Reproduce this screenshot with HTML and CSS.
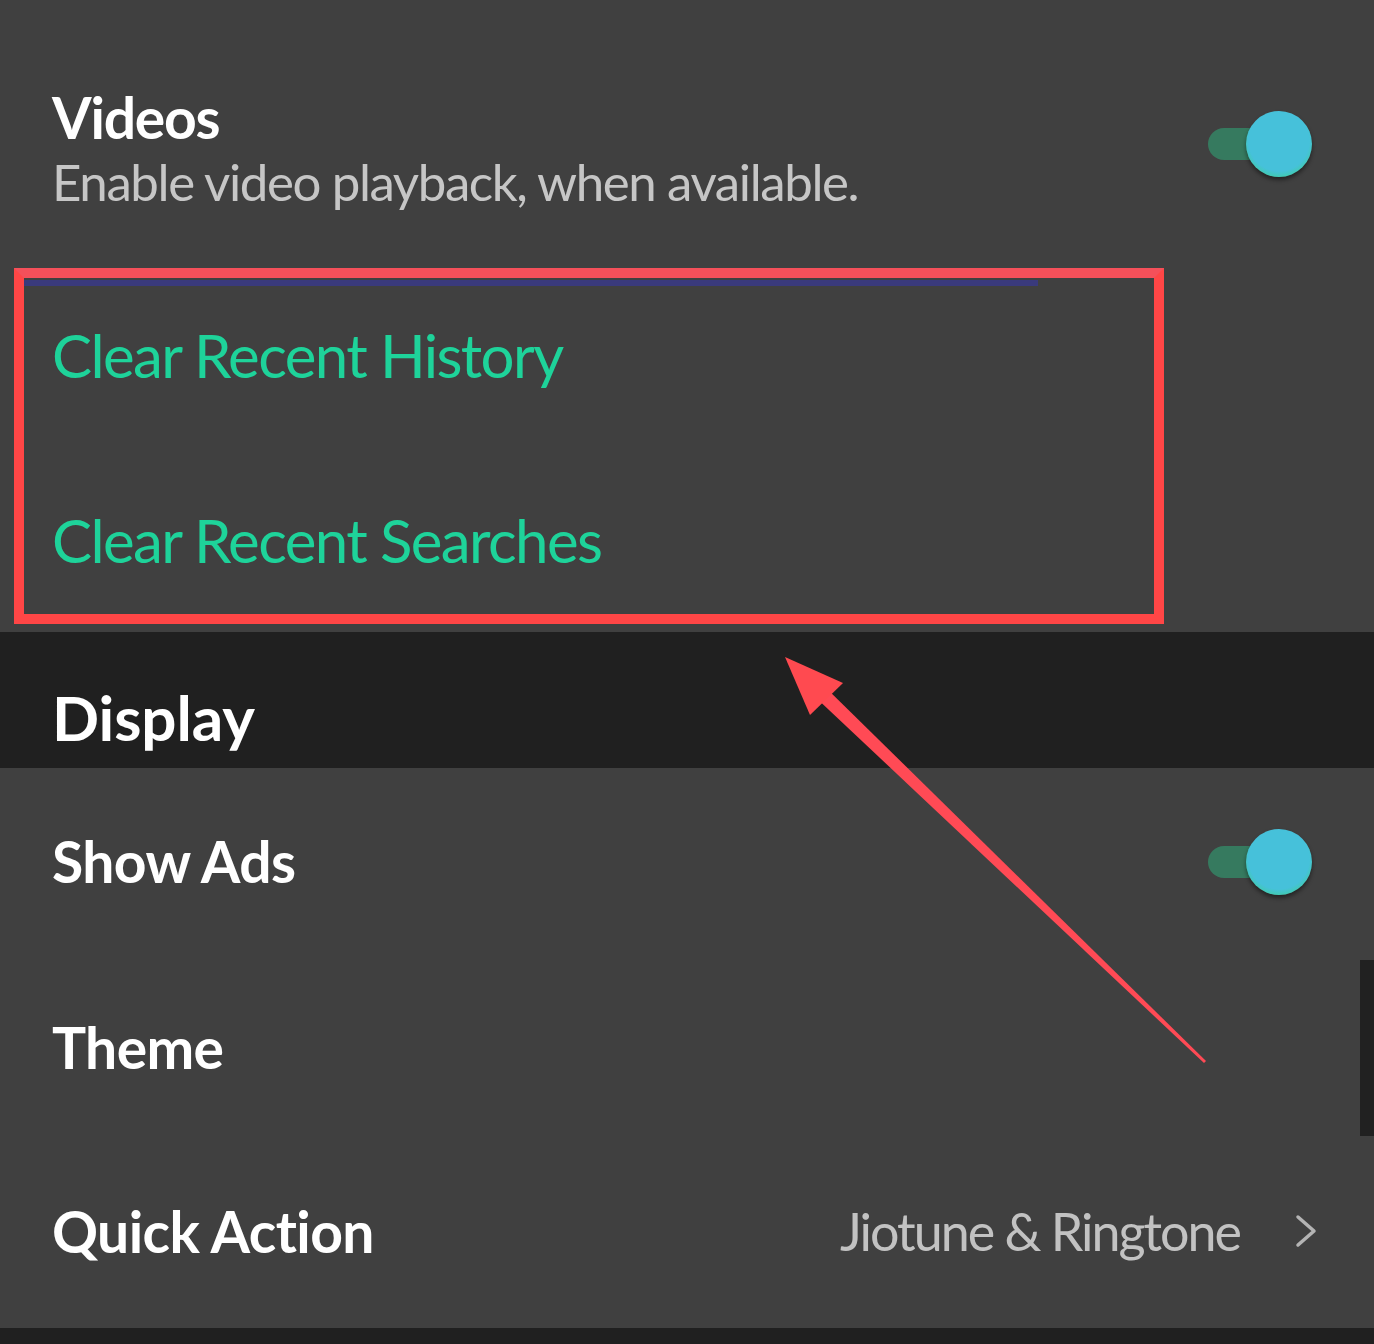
FILE: index.html
```html
<!DOCTYPE html>
<html lang="en">
<head>
<meta charset="utf-8">
<title>Settings</title>
<link rel="stylesheet" href="styles.css">
</head>
<body>
<div class="screen">
  <section class="group">
    <div class="row row-videos">
      <div class="row-text">
        <div class="title">Videos</div>
        <div class="desc">Enable video playback, when available.</div>
      </div>
      <span class="switch switch-top"><span class="knob"></span></span>
    </div>
    <div class="row row-link row-history"><span class="link">Clear Recent History</span></div>
    <div class="row row-link row-searches"><span class="link">Clear Recent Searches</span></div>
  </section>

  <h2 class="section-head">Display</h2>

  <section class="group">
    <div class="row row-ads">
      <span class="title">Show Ads</span>
      <span class="switch"><span class="knob"></span></span>
    </div>
    <div class="row row-theme"><span class="title">Theme</span></div>
    <div class="row row-quick">
      <span class="title">Quick Action</span>
      <span class="value">Jiotune &amp; Ringtone</span>
      <svg class="chevron" width="24" height="36" viewBox="0 0 24 36"><path d="M4 4 L20 18 L4 32" fill="none" stroke="#b4b4b4" stroke-width="3.5" stroke-linecap="round" stroke-linejoin="round"/></svg>
    </div>
  </section>

  <div class="footer-bar"></div>

  <div class="scrollbar"></div>
  <div class="highlight"></div>
  <svg class="arrow" width="1374" height="1344" viewBox="0 0 1374 1344">
    <polygon points="812,694 822,684 1206,1061 1204,1063" fill="#ff4a55"/>
    <polygon points="785,657 843,683 810,715" fill="#ff4a50"/>
  </svg>
</div>
</body>
</html>
```

FILE: styles.css
```css
html, body {
  margin: 0;
  padding: 0;
  background: #404040;
}

.screen {
  position: relative;
  width: 1374px;
  height: 1344px;
  overflow: hidden;
  background: #404040;
  font-family: Lato, "Open Sans", sans-serif;
  color: #ffffff;
}

.group {
  display: flex;
  flex-direction: column;
}

.row {
  display: flex;
  align-items: center;
  padding: 0 62px 0 52px;
  box-sizing: border-box;
}

.title {
  font-size: 57px;
  font-weight: 700;
  line-height: 1.2;
  letter-spacing: -0.6px;
  color: #ffffff;
}

.row-videos {
  height: 262px;
  align-items: flex-start;
  justify-content: space-between;
  padding-top: 83px;
}

.row-videos .title { letter-spacing: -1.2px; }

.desc {
  font-size: 51px;
  line-height: 1.2;
  color: #c6c6c6;
  letter-spacing: -1.4px;
}

.row-history { height: 186px; }
.row-searches { height: 184px; }

.link {
  font-size: 60px;
  line-height: 1.2;
  color: #1ed39a;
  letter-spacing: -1.6px;
}

.section-head {
  margin: 0;
  height: 136px;
  box-sizing: border-box;
  padding: 48px 0 0 52px;
  background: #202020;
  font-size: 62px;
  font-weight: 700;
  line-height: 1.2;
  letter-spacing: -0.1px;
}

.row-ads {
  height: 187px;
  justify-content: space-between;
}
.row-theme { height: 185px; }
.row-quick {
  height: 188px;
  padding-right: 56px;
  padding-bottom: 6px;
}

.value {
  margin-left: auto;
  margin-right: 54px;
  font-size: 52px;
  line-height: 1.2;
  color: #c2c2c2;
  letter-spacing: -2px;
}

.chevron { display: block; }

.switch {
  position: relative;
  width: 104px;
  height: 80px;
  flex: none;
}
.switch-top { margin-top: 21px; }

.switch::before {
  content: "";
  position: absolute;
  left: 0;
  top: 24px;
  width: 84px;
  height: 32px;
  border-radius: 16px;
  background: #367a5f;
}

.knob {
  position: absolute;
  right: 0;
  top: 7px;
  width: 66px;
  height: 66px;
  border-radius: 50%;
  background: radial-gradient(circle at 50% 45%, #46c1da 0 62%, #3ecfa0 80%);
  box-shadow: 0 3px 4px rgba(0, 0, 0, 0.45);
}

.footer-bar {
  height: 16px;
  background: #202020;
}

.scrollbar {
  position: absolute;
  left: 1360px;
  top: 960px;
  width: 14px;
  height: 176px;
  background: #212121;
}

.highlight {
  position: absolute;
  left: 14px;
  top: 268px;
  width: 1150px;
  height: 356px;
  box-sizing: border-box;
  border: 10px solid #ff4646;
  border-top-color: #f5505a;
}

.highlight::before {
  content: "";
  position: absolute;
  left: 0;
  top: 2px;
  width: 1014px;
  height: 6px;
  background: #3a3a7c;
}

.arrow {
  position: absolute;
  left: 0;
  top: 0;
  pointer-events: none;
}
```
